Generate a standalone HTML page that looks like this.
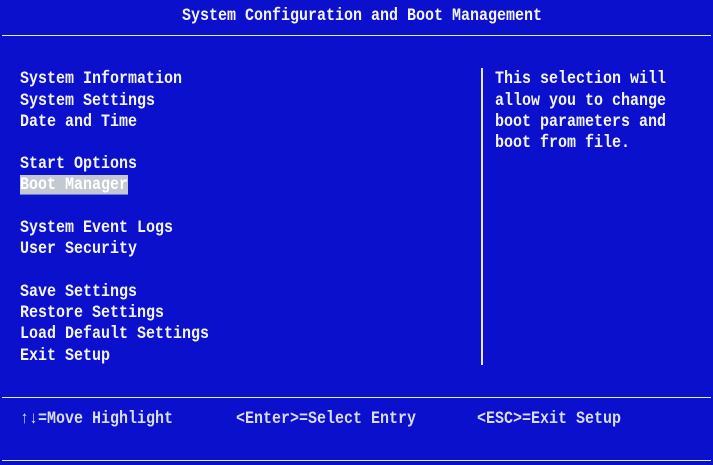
<!DOCTYPE html>
<html><head><style>
html,body{margin:0;padding:0;}
body{width:713px;height:465px;background:#0a10cc;position:relative;overflow:hidden;font-family:"Liberation Mono",monospace;font-size:15px;font-weight:bold;color:#f4f4f4;}
.t{position:absolute;white-space:pre;line-height:18px;height:18px;transform:scaleY(1.15);transform-origin:0 0;}
.hl{background:#c4c8d0;color:#fff;}
.h{position:absolute;left:2px;width:709px;height:1px;background:#e8e8f0;}
</style></head><body>
<div class="t" style="left:182px;top:6px">System Configuration and Boot Management</div>
<div class="h" style="top:35px"></div>
<div class="t" style="left:20px;top:69px">System Information</div>
<div class="t" style="left:20px;top:91px">System Settings</div>
<div class="t" style="left:20px;top:112px">Date and Time</div>
<div class="t" style="left:20px;top:154px">Start Options</div>
<div class="t" style="left:20px;top:175px"><span class="hl">Boot Manager</span></div>
<div class="t" style="left:20px;top:218px">System Event Logs</div>
<div class="t" style="left:20px;top:239px">User Security</div>
<div class="t" style="left:20px;top:282px">Save Settings</div>
<div class="t" style="left:20px;top:303px">Restore Settings</div>
<div class="t" style="left:20px;top:324px">Load Default Settings</div>
<div class="t" style="left:20px;top:346px">Exit Setup</div>
<div style="position:absolute;left:481px;top:68px;width:2px;height:297px;background:#e8e8f0"></div>
<div class="t" style="left:495px;top:69px">This selection will</div>
<div class="t" style="left:495px;top:91px">allow you to change</div>
<div class="t" style="left:495px;top:112px">boot parameters and</div>
<div class="t" style="left:495px;top:133px">boot from file.</div>
<div class="h" style="top:397px"></div>
<div class="t" style="left:20px;top:409px;color:#d8dcf0">↑↓=Move Highlight</div>
<div class="t" style="left:236px;top:409px;color:#d8dcf0">&lt;Enter&gt;=Select Entry</div>
<div class="t" style="left:477px;top:409px;color:#d8dcf0">&lt;ESC&gt;=Exit Setup</div>
<div class="h" style="top:460px"></div>
</body></html>
